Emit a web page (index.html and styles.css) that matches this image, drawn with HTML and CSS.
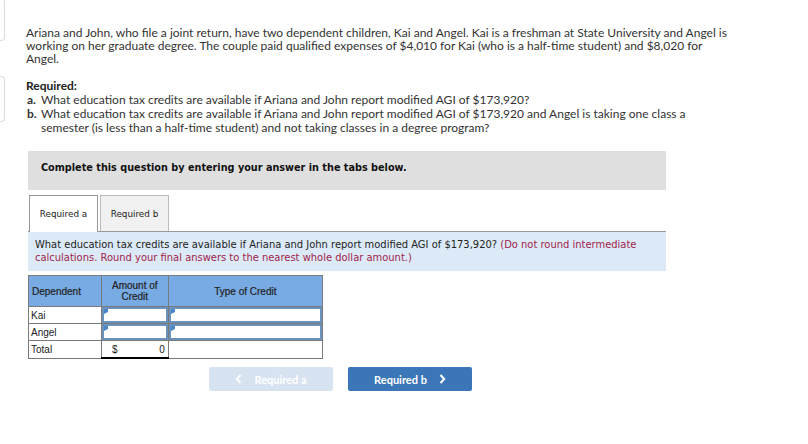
FILE: index.html
```html
<!DOCTYPE html>
<html>
<head>
<meta charset="utf-8">
<link rel="stylesheet" href="styles.css">
</head>
<body>
<div class="page">
  <div class="rail">
    <div class="stub stub-top"></div>
    <div class="stub stub-bottom"></div>
  </div>
  <main class="content">
    <p class="intro">Ariana and John, who file a joint return, have two dependent children, Kai and Angel. Kai is a freshman at State University and Angel is working on her graduate degree. The couple paid qualified expenses of $4,010 for Kai (who is a half-time student) and $8,020 for Angel.</p>
    <div class="required">
      <div class="req-title">Required:</div>
      <div class="req-item"><span class="req-letter">a.</span><span>What education tax credits are available if Ariana and John report modified AGI of $173,920?</span></div>
      <div class="req-item"><span class="req-letter">b.</span><span>What education tax credits are available if Ariana and John report modified AGI of $173,920 and Angel is taking one class a semester (is less than a half-time student) and not taking classes in a degree program?</span></div>
    </div>
    <div class="panel">
      <div class="banner">Complete this question by entering your answer in the tabs below.</div>
      <div class="tabs">
        <div class="tab tab-active">Required a</div>
        <div class="tab tab-idle">Required b</div>
      </div>
      <div class="info">What education tax credits are available if Ariana and John report modified AGI of $173,920? <span class="hint">(Do not round intermediate calculations. Round your final answers to the nearest whole dollar amount.)</span></div>
      <table class="grid">
        <colgroup><col class="c1"><col class="c2"><col class="c3"></colgroup>
        <thead>
          <tr><th class="th-left">Dependent</th><th>Amount of<br>Credit</th><th>Type of Credit</th></tr>
        </thead>
        <tbody>
          <tr><td>Kai</td><td class="input"><span class="flag"></span></td><td class="input"><span class="flag"></span></td></tr>
          <tr><td>Angel</td><td class="input"><span class="flag"></span></td><td class="input"><span class="flag"></span></td></tr>
          <tr><td>Total</td><td class="total"><span>$</span><span class="num">0</span></td><td></td></tr>
        </tbody>
      </table>
      <div class="nav">
        <button class="btn btn-prev"><svg class="chev" width="7" height="10" viewBox="0 0 7 10"><path d="M5.5 1 L1.8 5 L5.5 9" fill="none" stroke="#fff" stroke-width="2"/></svg>Required a</button>
        <button class="btn btn-next">Required b<svg class="chev" width="7" height="10" viewBox="0 0 7 10"><path d="M1.5 1 L5.2 5 L1.5 9" fill="none" stroke="#fff" stroke-width="2"/></svg></button>
      </div>
    </div>
  </main>
</div>
</body>
</html>
```

FILE: styles.css
```css
html, body {
  margin: 0;
  padding: 0;
  background: #ffffff;
}

.page {
  display: flex;
  width: 808px;
  height: 444px;
  overflow: hidden;
}

.rail {
  width: 26px;
  flex: none;
  display: flex;
  flex-direction: column;
}

.stub {
  width: 5px;
  border: 1px solid #dcdcdc;
  border-left: none;
  border-radius: 0 4px 4px 0;
  box-sizing: border-box;
}

.stub-top {
  height: 43px;
  margin-top: -2px;
}

.stub-bottom {
  height: 46px;
  margin-top: 35px;
}

.content {
  flex: none;
  width: 720px;
  padding-top: 26px;
  font-family: Lato, "Open Sans", sans-serif;
  color: #333333;
}

.intro {
  margin: 0;
  font-size: 12px;
  line-height: 13px;
  width: 705px;
}

.required {
  margin-top: 14px;
  font-size: 12px;
  line-height: 14px;
  width: 705px;
}

.req-title {
  font-weight: 700;
  color: #222;
}

.req-item {
  display: flex;
  padding-left: 1px;
}

.req-letter {
  font-weight: 700;
  width: 14px;
  flex: none;
}

.panel {
  margin-left: 2px;
  margin-top: 16px;
  width: 638px;
}

.banner {
  background: #dfdfdf;
  height: 39px;
  box-sizing: border-box;
  padding: 10px 0 0 13px;
  font-family: "DejaVu Sans", Verdana, sans-serif;
  font-weight: 700;
  font-size: 9.7px;
  line-height: 14px;
  color: #111;
}

.tabs {
  display: flex;
  gap: 2px;
  margin-top: 5px;
  padding-left: 1px;
  border-bottom: 1px solid #999;
  height: 36px;
}

.tab {
  width: 69px;
  box-sizing: border-box;
  border: 1px solid #bbb;
  border-bottom: none;
  font-family: "DejaVu Sans", Verdana, sans-serif;
  font-size: 8.8px;
  color: #222;
  display: flex;
  align-items: center;
  justify-content: center;
}

.tab-active {
  background: #fff;
  border-color: #999;
  height: 37px;
  margin-bottom: -1px;
}

.tab-idle {
  background: #f1f1f1;
}

.info {
  background: #dceaf8;
  padding: 6px 7px 4px 7px;
  font-family: "DejaVu Sans", Verdana, sans-serif;
  font-size: 9.95px;
  line-height: 13px;
  color: #222;
  height: 39px;
  box-sizing: border-box;
}

.hint {
  color: #a0234a;
}

.grid {
  margin-top: 4px;
  border-collapse: collapse;
  width: 295px;
  font-family: "Liberation Sans", Arial, sans-serif;
  font-size: 10px;
  color: #222;
}

.c1 { width: 73px; }
.c2 { width: 67px; }
.c3 { width: 155px; }

.grid th {
  background: #78aae3;
  border: 1px solid #7a7a7a;
  height: 30px;
  font-weight: 400;
  color: #222;
  line-height: 11px;
  padding: 0;
  vertical-align: middle;
  -webkit-text-stroke: 0.2px #222;
}

.grid th.th-left {
  text-align: left;
  padding-left: 3px;
}

.grid td {
  border: 1px solid #7a7a7a;
  height: 16px;
  padding: 0 0 0 2px;
  position: relative;
}

.grid td.input {
  padding: 0;
  box-shadow: inset 0 0 0 2px #6a92bd;
  background: #fff;
}

.flag {
  position: absolute;
  left: 2px;
  top: 2px;
  width: 0;
  height: 0;
  border-top: 3px solid #4a86c8;
  border-bottom: 2px solid transparent;
  border-left: 4px solid #4a86c8;
  border-right: 0;
}

.grid td.total {
  padding: 0 3px 0 10px;
  border-bottom: 2px solid #000;
}

.num {
  float: right;
}

.nav {
  display: flex;
  gap: 15px;
  margin-top: 8px;
  padding-left: 181px;
}

.btn {
  width: 124px;
  height: 24px;
  border: none;
  border-radius: 2px;
  color: #fff;
  font-family: Lato, "Open Sans", sans-serif;
  font-weight: 700;
  font-size: 11px;
  display: flex;
  align-items: center;
  justify-content: center;
  gap: 12px;
  padding: 0;
}

.btn-prev {
  background: #d7e3f1;
}

.btn-next {
  background: #3a76b8;
}

.chev {
  display: block;
}
```
